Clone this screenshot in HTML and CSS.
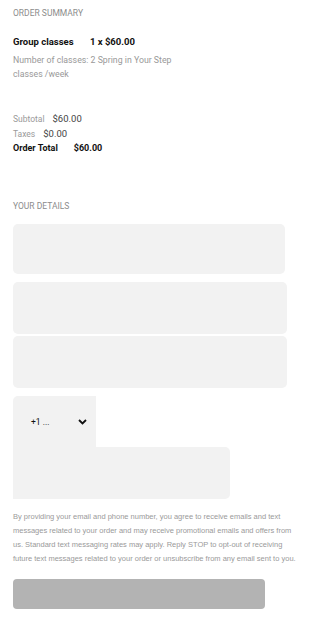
FILE: index.html
```html
<!DOCTYPE html>
<html lang="en">
<head>
    <meta charset="UTF-8">
    <meta name="viewport" content="width=device-width, initial-scale=1.0">
    <title>Checkout</title>
    <link rel="stylesheet" href="styles.css">
</head>
<body>
    <div class="page">
        <!-- Order summary -->
        <h2 class="section-title">Order Summary</h2>
        <div class="item-row">
            <span class="item-name">Group classes</span>
            <span class="item-qty">1 x $60.00</span>
        </div>
        <div class="item-desc">Number of classes: 2 Spring in Your Step classes /week</div>

        <div class="totals">
            <div class="total-row"><span class="total-label">Subtotal</span><span class="total-value">$60.00</span></div>
            <div class="total-row"><span class="total-label">Taxes</span><span class="total-value">$0.00</span></div>
            <div class="total-row grand"><span class="total-label">Order Total</span><span class="total-value">$60.00</span></div>
        </div>

        <!-- Details form -->
        <h2 class="section-title details-title">Your Details</h2>
        <div class="field field-first"></div>
        <div class="field field-wide"></div>
        <div class="field field-wide field-tight"></div>
        <div class="phone-select">
            <span class="phone-code">+1 ...</span>
            <svg class="chevron" width="9" height="6" viewBox="0 0 9 6">
                <path d="M1 1 L4.5 4.5 L8 1" fill="none" stroke="#111" stroke-width="1.8"/>
            </svg>
        </div>
        <div class="field field-phone"></div>

        <p class="disclaimer">By providing your email and phone number, you agree to receive emails and text messages related to your order and may receive promotional emails and offers from us. Standard text messaging rates may apply. Reply STOP to opt-out of receiving future text messages related to your order or unsubscribe from any email sent to you.</p>

        <div class="submit-btn"></div>
    </div>
</body>
</html>
```

FILE: styles.css
```css
body {
    margin: 0;
    background: #fff;
    font-family: Roboto, "Liberation Sans", sans-serif;
}

.page {
    padding: 6px 13px 20px 13px;
}

.section-title {
    margin: 0;
    font-size: 8.5px;
    line-height: 14px;
    font-weight: 400;
    text-transform: uppercase;
    color: #8c8c8c;
}

.item-row {
    margin-top: 15px;
    font-size: 9.5px;
    line-height: 14px;
    font-weight: 700;
    color: #111;
}

.item-qty {
    margin-left: 14px;
}

.item-desc {
    margin-top: 4px;
    width: 175px;
    font-size: 8.75px;
    line-height: 14px;
    color: #999;
}

.totals {
    margin-top: 30px;
    font-size: 9px;
    line-height: 15px;
}

.total-row {
    height: 15px;
}

.total-label {
    font-size: 8.5px;
    color: #9a9a9a;
    margin-right: 8px;
}

.total-value {
    font-size: 9.5px;
    color: #444;
}

.grand {
    font-weight: 700;
}

.grand .total-label,
.grand .total-value {
    font-size: 9px;
    color: #111;
}

.grand .total-label {
    margin-right: 16px;
}

.details-title {
    margin-top: 43px;
}

.field {
    background: #f2f2f2;
    border-radius: 5px;
    height: 52px;
}

.field-first {
    margin-top: 11px;
    width: 272px;
    height: 50px;
}

.field-wide {
    margin-top: 8px;
    width: 274px;
}

.field-tight {
    margin-top: 2px;
}

.phone-select {
    margin-top: 8px;
    width: 83px;
    height: 51px;
    background: #f2f2f2;
    border-radius: 5px 0 0 0;
    display: flex;
    align-items: center;
    justify-content: space-between;
    padding: 0 9px 0 18px;
    box-sizing: border-box;
    font-size: 8.5px;
    color: #111;
}

.chevron {
    display: block;
}

.field-phone {
    width: 217px;
    border-radius: 0 5px 5px 0;
}

.disclaimer {
    margin: 11px 0 0 0;
    font-family: "Liberation Sans", Arial, sans-serif;
    font-size: 7.5px;
    line-height: 14px;
    color: #9a9a9a;
}

.submit-btn {
    margin-top: 13px;
    width: 252px;
    height: 30px;
    background: #b3b3b3;
    border-radius: 4px;
}
```
